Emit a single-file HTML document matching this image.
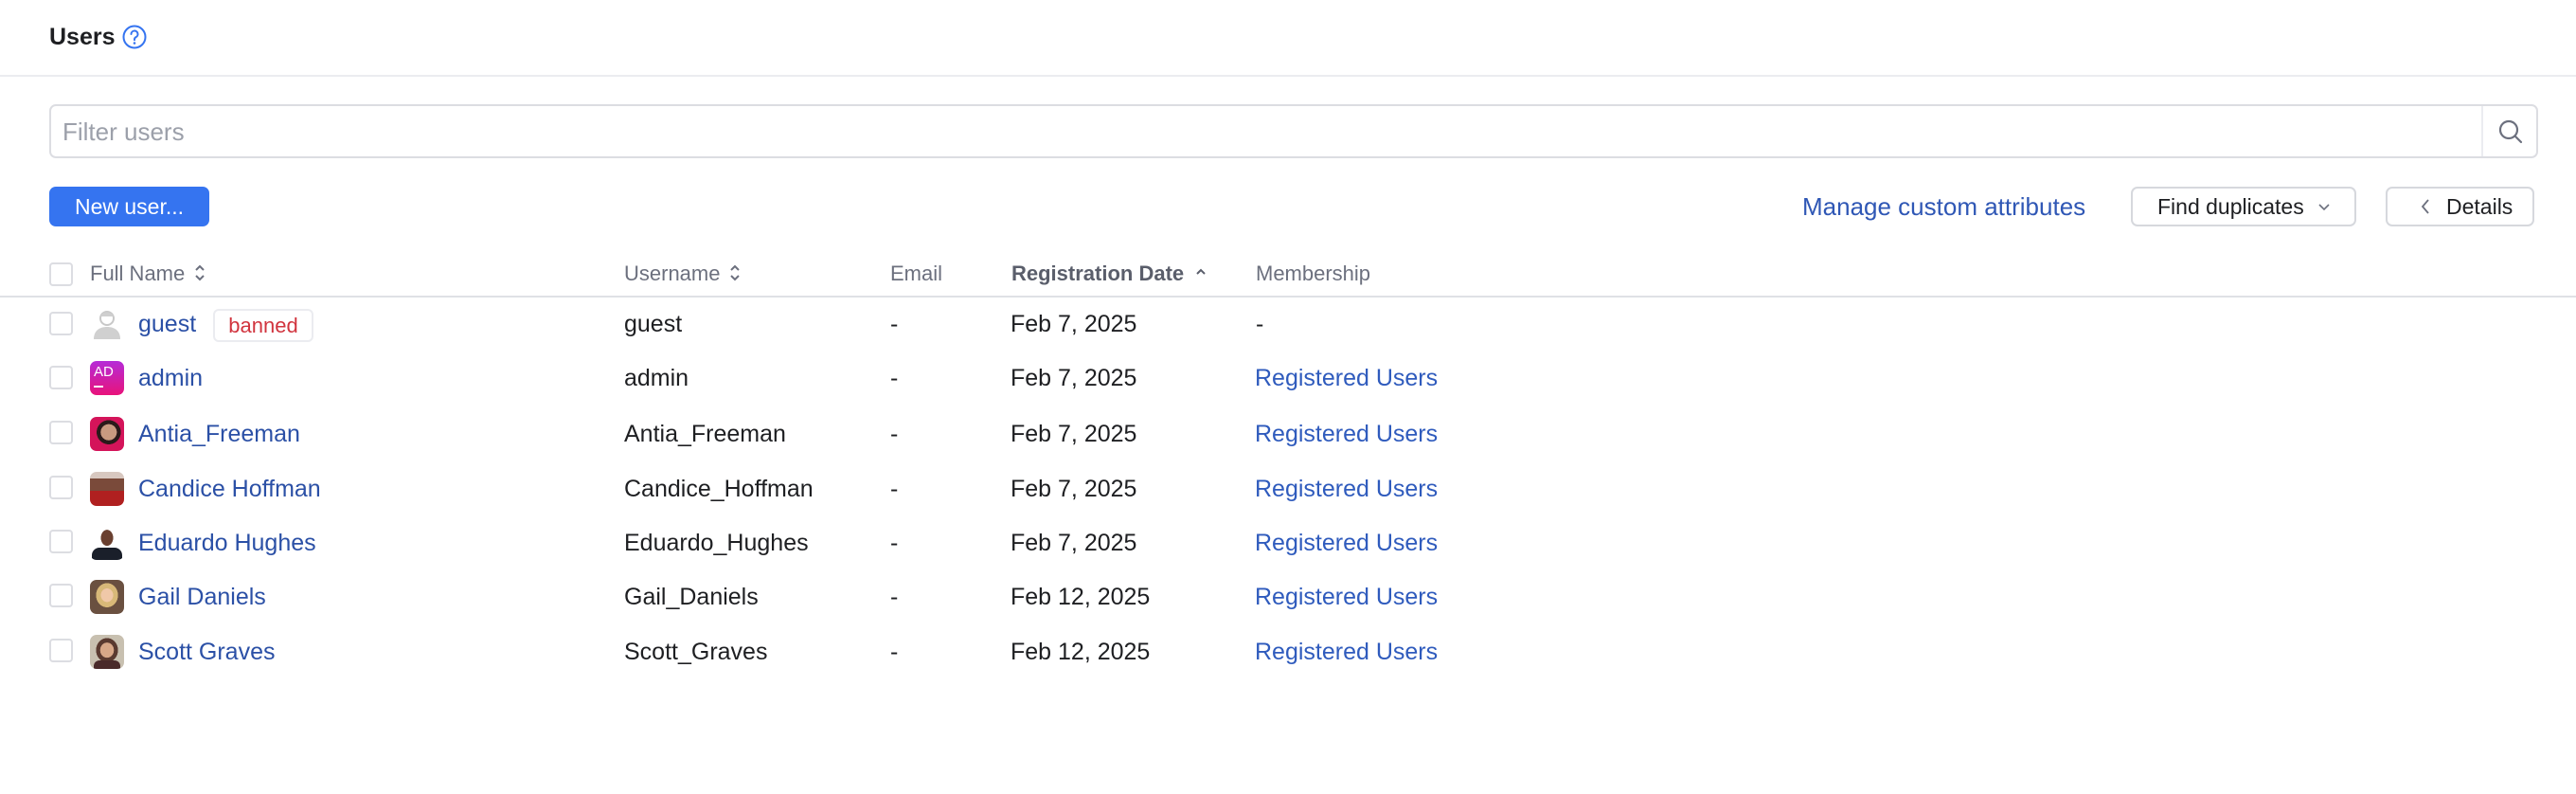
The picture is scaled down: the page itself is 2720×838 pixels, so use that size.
<!DOCTYPE html>
<html><head><meta charset="utf-8"><style>
*{box-sizing:border-box;margin:0;padding:0}
body{width:2720px;height:838px;background:#fff;font-family:"Liberation Sans",Arial,sans-serif;position:relative;overflow:hidden;color:#1e1f22}
.a{position:absolute;white-space:nowrap}
.cb{position:absolute;left:52px;width:25px;height:25px;border:2px solid #dcdde2;border-radius:4px;background:#fff}
.hd{font-size:22px;color:#6c707e;line-height:24px}
.av{position:absolute;left:95px;width:36px;height:36px;border-radius:7px;overflow:hidden}
.nm{left:146px;font-size:25px;color:#2b50a6;line-height:30px}
.tx{font-size:25px;color:#1e1f22;line-height:30px}
.lk{font-size:25px;color:#2f5bbd;line-height:30px}
.btn{position:absolute;top:197px;height:42px;border:2px solid #d6d8dd;border-radius:7px;background:#fff;font-size:23px;color:#1e1f22;line-height:38px}
.srt{vertical-align:-2px;margin-left:10px}
</style></head><body>
<div class="a" style="left:52px;top:24px;font-size:25px;font-weight:bold;line-height:30px">Users</div>
<svg class="a" style="left:129px;top:26px" width="26" height="26" viewBox="0 0 26 26"><circle cx="13" cy="13" r="11.5" fill="none" stroke="#3574f0" stroke-width="2"/><path d="M9.5 10a3.5 3.5 0 1 1 5 3.2c-1 .5-1.5 1.2-1.5 2.3v.8" fill="none" stroke="#3574f0" stroke-width="2" stroke-linecap="round"/><circle cx="13" cy="19.5" r="1.3" fill="#3574f0"/></svg>
<div class="a" style="left:0;top:79px;width:2720px;height:2px;background:#ebecf0"></div>

<div class="a" style="left:52px;top:110px;width:2628px;height:57px;border:2px solid #dcdde2;border-radius:7px"></div>
<div class="a" style="left:2620px;top:112px;width:2px;height:53px;background:#ebecf0"></div>
<div class="a" style="left:66px;top:123px;font-size:26px;color:#9ca0aa;line-height:32px">Filter users</div>
<svg class="a" style="left:2636px;top:124px" width="30" height="30" viewBox="0 0 30 30"><circle cx="13" cy="13" r="9" fill="none" stroke="#6c707e" stroke-width="2.2"/><path d="M19.5 19.5L26 26" stroke="#6c707e" stroke-width="2.2" stroke-linecap="round"/></svg>

<div class="a" style="left:52px;top:197px;width:169px;height:42px;background:#3574f0;border-radius:7px;color:#fff;font-size:23px;line-height:42px;text-align:center">New user...</div>
<div class="a" style="left:1903px;top:202px;font-size:26px;color:#2f57b5;line-height:32px">Manage custom attributes</div>
<div class="btn" style="left:2250px;width:238px;padding-left:26px">Find duplicates <svg width="14" height="10" viewBox="0 0 14 10" style="margin-left:8px;vertical-align:2px"><path d="M2 2l5 5 5-5" fill="none" stroke="#6c707e" stroke-width="1.6"/></svg></div>
<div class="btn" style="left:2519px;width:157px;padding-left:34px"><svg width="12" height="18" viewBox="0 0 12 18" style="margin-right:16px;vertical-align:-1px"><path d="M9 2L3 9l6 7" fill="none" stroke="#6c707e" stroke-width="1.8"/></svg>Details</div>

<div class="cb" style="top:277px"></div>
<div class="a hd" style="left:95px;top:277px">Full Name<svg class="srt" width="12" height="20" viewBox="0 0 12 20"><path d="M2 7l4-4 4 4M2 13l4 4 4-4" fill="none" stroke="#6c707e" stroke-width="2"/></svg></div>
<div class="a hd" style="left:659px;top:277px">Username<svg class="srt" width="12" height="20" viewBox="0 0 12 20"><path d="M2 7l4-4 4 4M2 13l4 4 4-4" fill="none" stroke="#6c707e" stroke-width="2"/></svg></div>
<div class="a hd" style="left:940px;top:277px">Email</div>
<div class="a hd" style="left:1068px;top:277px;font-weight:bold;color:#5a5e6b">Registration Date<svg class="srt" width="12" height="20" viewBox="0 0 12 20" style="margin-left:12px"><path d="M2 11l4-4 4 4" fill="none" stroke="#5a5e6b" stroke-width="2"/></svg></div>
<div class="a hd" style="left:1326px;top:277px">Membership</div>
<div class="a" style="left:0;top:312px;width:2720px;height:2px;background:#dfe1e5"></div>

<div class="cb" style="top:329px"></div>
<svg class="av" style="top:324px" viewBox="0 0 36 36"><circle cx="18" cy="12" r="7" fill="#fff" stroke="#c8c8c8" stroke-width="2"/><path d="M4 34c0-9 6-13 14-13s14 4 14 13z" fill="#d0d0d0"/><path d="M11 10c2-6 12-6 14 0" fill="#cfcfcf"/></svg>
<div class="a nm" style="top:327px">guest</div>
<div class="a" style="left:225px;top:326px;width:106px;height:35px;border:2px solid #ebecf0;border-radius:6px;color:#d1343e;font-size:22px;line-height:31px;text-align:center">banned</div>
<div class="a tx" style="left:659px;top:327px">guest</div>
<div class="a tx" style="left:940px;top:327px">-</div>
<div class="a tx" style="left:1067px;top:327px">Feb 7, 2025</div>
<div class="a tx" style="left:1326px;top:327px">-</div>

<div class="cb" style="top:386px"></div>
<div class="av" style="top:381px;background:linear-gradient(180deg,#b52bd8,#e8137a);color:#fff;font-size:15px;line-height:16px;padding:4px 0 0 4px">AD<div style="width:10px;height:2px;background:#fff;margin-top:6px"></div></div>
<div class="a nm" style="top:384px">admin</div>
<div class="a tx" style="left:659px;top:384px">admin</div>
<div class="a tx" style="left:940px;top:384px">-</div>
<div class="a tx" style="left:1067px;top:384px">Feb 7, 2025</div>
<div class="a lk" style="left:1325px;top:384px">Registered Users</div>

<div class="cb" style="top:444px"></div>
<div class="av" style="top:440px;background:radial-gradient(circle at 55% 45%,#c89a80 0 30%,#2a1a1a 31% 45%,#d4145a 46%)"></div>
<div class="a nm" style="top:443px">Antia_Freeman</div>
<div class="a tx" style="left:659px;top:443px">Antia_Freeman</div>
<div class="a tx" style="left:940px;top:443px">-</div>
<div class="a tx" style="left:1067px;top:443px">Feb 7, 2025</div>
<div class="a lk" style="left:1325px;top:443px">Registered Users</div>

<div class="cb" style="top:502px"></div>
<div class="av" style="top:498px;background:linear-gradient(180deg,#d8c8c0 0 20%,#7a4a3a 20% 55%,#b02020 55%)"></div>
<div class="a nm" style="top:501px">Candice Hoffman</div>
<div class="a tx" style="left:659px;top:501px">Candice_Hoffman</div>
<div class="a tx" style="left:940px;top:501px">-</div>
<div class="a tx" style="left:1067px;top:501px">Feb 7, 2025</div>
<div class="a lk" style="left:1325px;top:501px">Registered Users</div>

<div class="cb" style="top:559px"></div>
<div class="av" style="top:555px;background:radial-gradient(ellipse at 50% 35%,#6a4030 0 25%,#fff 26%)"><div style="position:absolute;bottom:0;left:2px;width:32px;height:13px;background:#1a1f2a;border-radius:8px 8px 0 0"></div></div>
<div class="a nm" style="top:558px">Eduardo Hughes</div>
<div class="a tx" style="left:659px;top:558px">Eduardo_Hughes</div>
<div class="a tx" style="left:940px;top:558px">-</div>
<div class="a tx" style="left:1067px;top:558px">Feb 7, 2025</div>
<div class="a lk" style="left:1325px;top:558px">Registered Users</div>

<div class="cb" style="top:616px"></div>
<div class="av" style="top:612px;background:radial-gradient(ellipse at 50% 45%,#f0c8a8 0 25%,#d8b878 26% 45%,#6a5040 46%)"></div>
<div class="a nm" style="top:615px">Gail Daniels</div>
<div class="a tx" style="left:659px;top:615px">Gail_Daniels</div>
<div class="a tx" style="left:940px;top:615px">-</div>
<div class="a tx" style="left:1067px;top:615px">Feb 12, 2025</div>
<div class="a lk" style="left:1325px;top:615px">Registered Users</div>

<div class="cb" style="top:674px"></div>
<div class="av" style="top:670px;background:radial-gradient(ellipse at 50% 45%,#d8a888 0 28%,#5a3a30 29% 45%,#c8c0b0 46%)"><div style="position:absolute;bottom:0;left:4px;width:28px;height:9px;background:#4a2a2a;border-radius:6px 6px 0 0"></div></div>
<div class="a nm" style="top:673px">Scott Graves</div>
<div class="a tx" style="left:659px;top:673px">Scott_Graves</div>
<div class="a tx" style="left:940px;top:673px">-</div>
<div class="a tx" style="left:1067px;top:673px">Feb 12, 2025</div>
<div class="a lk" style="left:1325px;top:673px">Registered Users</div>
</body></html>
